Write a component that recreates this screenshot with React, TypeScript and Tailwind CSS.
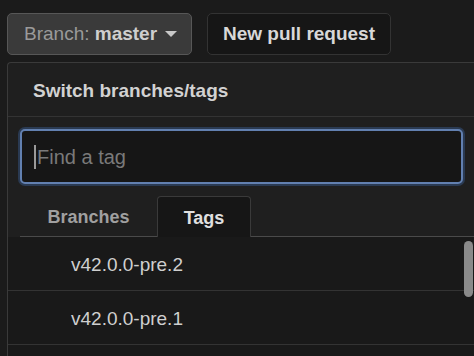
import React from 'react';

const tags = ['v42.0.0-pre.2', 'v42.0.0-pre.1'];

export default function App() {
  return (
    <div
      className="relative w-[474px] h-[356px] overflow-hidden bg-[#1b1b1b] text-[#d4d4d4]"
      style={{ fontFamily: '"Liberation Sans", Arial, sans-serif' }}
    >
      {/* Top buttons */}
      <div className="flex gap-[15px] pt-[13px] pl-[7px]">
        <button className="flex items-center h-[42px] w-[185px] pl-[16px] rounded-[5px] border border-[#575757] bg-[#3a3a3a] text-[19px] text-[#9a9a9a]">
          Branch:&nbsp;<span className="font-bold text-[#cfcfcf]">master</span>
          <span className="ml-[8px] w-0 h-0 border-x-[6px] border-x-transparent border-t-[6px] border-t-[#c8c8c8]" />
        </button>
        <button className="flex items-center justify-center h-[42px] w-[184px] rounded-[5px] border border-[#333] bg-[#161616] text-[19px] font-bold text-[#d8d8d8]">
          New pull request
        </button>
      </div>

      {/* Dropdown panel */}
      <div className="mt-[7px] ml-[7px] w-[480px] rounded-tl-[4px] border-l border-t border-[#3a3a3a] bg-[#1f1f1f]">
        <div className="flex items-center h-[54px] pt-[4px] pl-[25px] border-b border-[#333] text-[19px] font-bold text-[#d2d2d2]">
          Switch branches/tags
        </div>

        <div className="pt-[12px] pl-[12px]">
          <div className="flex items-center h-[55px] w-[443px] rounded-[5px] border-2 border-[#6280b0] bg-[#161616] pl-[12px] shadow-[0_0_0_2px_#2a3a52] text-[20px] text-[#7a7a7a]">
            <span className="w-[2px] h-[24px] bg-[#9a9a9a] mr-[1px]" />
            Find a tag
          </div>
        </div>

        {/* Tabs */}
        <div className="flex mt-[12px] ml-[12px] h-[41px] border-b border-[#4a4a4a]">
          <div className="flex items-center justify-center w-[137px] pt-[2px] text-[18px] font-bold text-[#a0a0a0]">
            Branches
          </div>
          <div className="flex items-center justify-center w-[94px] h-[41px] pt-[2px] -mb-px rounded-t-[4px] border border-b-0 border-[#3a3a3a] bg-[#161616] text-[18px] font-bold text-[#e0e0e0]">
            Tags
          </div>
        </div>

        {/* Tag rows */}
        <div className="bg-[#191919]">
          {tags.map((t) => (
            <div key={t} className="flex items-center h-[54px] pt-[3px] pl-[63px] border-b border-[#333] text-[19px] text-[#cfcfcf]">
              {t}
            </div>
          ))}
          <div className="h-[20px]" />
        </div>
      </div>

      {/* Scrollbar thumb */}
      <div className="absolute left-[464px] top-[241px] w-[9px] h-[56px] rounded-full bg-[#8a8a8a]" />
    </div>
  );
}
